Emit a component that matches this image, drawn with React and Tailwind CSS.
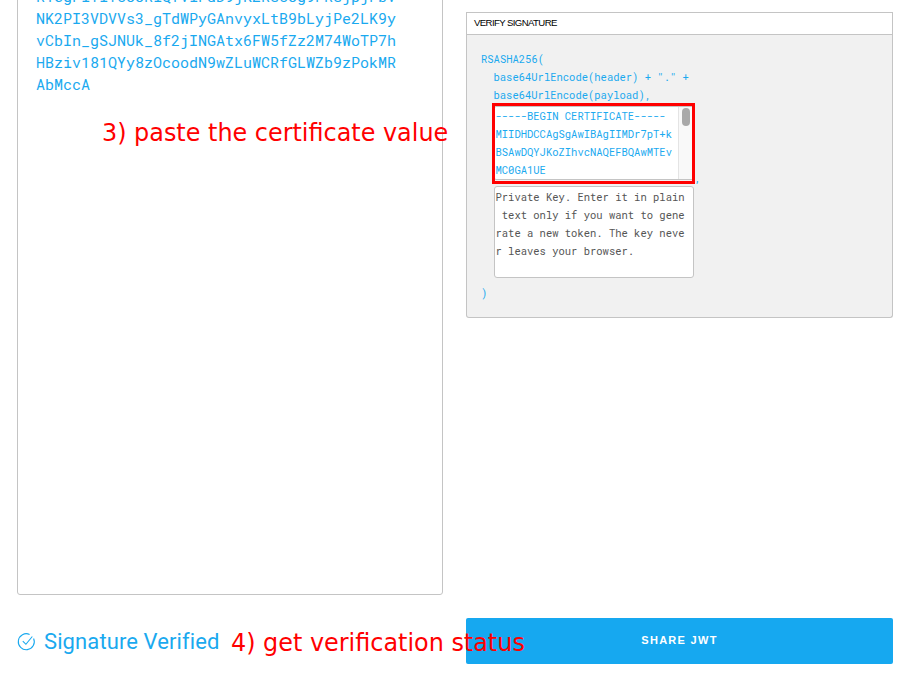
const mono = "font-['Roboto_Mono','DejaVu_Sans_Mono','Liberation_Mono',monospace]";
const note = "font-['DejaVu_Sans','Liberation_Sans',sans-serif]";

const tokenLines = [
  "R1egPiTiT8ooRiQfViPaD9jKZRs8og9PRsjpjPbV",
  "NK2PI3VDVVs3_gTdWPyGAnvyxLtB9bLyjPe2LK9y",
  "vCbIn_gSJNUk_8f2jINGAtx6FW5fZz2M74WoTP7h",
  "HBziv181QYy8zOcoodN9wZLuWCRfGLWZb9zPokMR",
  "AbMccA",
];

const certLines = [
  "-----BEGIN CERTIFICATE-----",
  "MIIDHDCCAgSgAwIBAgIIMDr7pT+k",
  "BSAwDQYJKoZIhvcNAQEFBQAwMTEv",
  "MC0GA1UE",
];

const keyLines = [
  "Private Key. Enter it in plain",
  " text only if you want to gene",
  "rate a new token. The key neve",
  "r leaves your browser.",
];

function CheckIcon() {
  return (
    <svg width="19" height="19" viewBox="0 0 19 19" fill="none" stroke="#1aa9ef" strokeWidth="1.1">
      <path d="M16.6 6.4A8 8 0 1 1 12.6 2.4" />
      <path d="M5.8 9.2l3.1 3.1 6.4-7.8" />
    </svg>
  );
}

export default function App() {
  return (
    <div className="relative h-[673px] w-[902px] overflow-hidden bg-white font-['Roboto',sans-serif]">
      <div className="flex items-start gap-[23px] pl-[17px]">
        <div className="-mt-[20px] h-[615px] w-[426px] rounded-[3px] border border-[#c4c4c4] pl-[18px] pt-[4px]">
          <div className={`${mono} text-[15px] leading-[22px] text-[#1aa9ef]`}>
            {tokenLines.map((line) => (
              <div key={line}>{line}</div>
            ))}
          </div>
        </div>

        <div className="-mt-[20px] w-[427px] pt-[32px]">
          <div className="flex h-[23px] items-center border border-[#c4c4c4] pl-[7px] font-['Liberation_Sans',sans-serif] text-[9.6px] tracking-[-0.6px] text-black">
            VERIFY SIGNATURE
          </div>
          <div className={`${mono} h-[283px] rounded-b-[3px] border border-t-0 border-[#c4c4c4] bg-[#f1f1f1] pl-[14px] pt-[15px] text-[10.5px] leading-[18px] text-[#1aa9ef]`}>
            <div>RSASHA256(</div>
            <div className="pl-[12.5px]">
              <div>base64UrlEncode(header) + "." +</div>
              <div>base64UrlEncode(payload),</div>
              <div className="mt-[2px] flex items-end">
                <div className="flex h-[74px] w-[200px] overflow-hidden rounded-[2px] border border-[#c4c4c4] bg-white">
                  <div className="min-w-0 flex-1 whitespace-pre pl-[1px]">
                    {certLines.map((line) => (
                      <div key={line}>{line}</div>
                    ))}
                  </div>
                  <div className="w-[15px] shrink-0 border-l border-[#e4e4e4] bg-[#f9f9f9] pl-[3px] pt-[1px]">
                    <div className="h-[18px] w-[8px] rounded-full bg-[#a9a9a9]" />
                  </div>
                </div>
                <span className="pl-[1px] leading-[4px]">,</span>
              </div>
              <div className="mt-[6px] h-[92px] w-[200px] whitespace-pre rounded-[3px] border border-[#c4c4c4] bg-white pl-[1px] pt-[1px] text-[#555]">
                {keyLines.map((line) => (
                  <div key={line}>{line}</div>
                ))}
              </div>
            </div>
            <div className="mt-[6px]">)</div>
          </div>
        </div>
      </div>

      <div className="flex items-center pl-[17px] pt-[23px]">
        <div className="flex w-[449px] items-center gap-[8px]">
          <CheckIcon />
          <span className="text-[22px] font-normal tracking-[0.1px] text-[#1aa9ef]">Signature Verified</span>
        </div>
        <button className="h-[46px] w-[427px] rounded-[2px] bg-[#16a8f0] pb-[2px] font-['Liberation_Sans',sans-serif] text-[11px] font-bold tracking-[1.3px] text-white">
          SHARE JWT
        </button>
      </div>

      <div className="absolute left-[492px] top-[103px] h-[81px] w-[203px] border-[3px] border-[#ff0000]" />
      <span className={`${note} absolute left-[102px] top-[118px] whitespace-nowrap text-[23.9px] leading-[30px] text-[#ff0000]`}>
        3) paste the certificate value
      </span>
      <span className={`${note} absolute left-[231px] top-[628px] whitespace-nowrap text-[23.9px] leading-[30px] text-[#ff0000]`}>
        4) get verification status
      </span>
    </div>
  );
}
